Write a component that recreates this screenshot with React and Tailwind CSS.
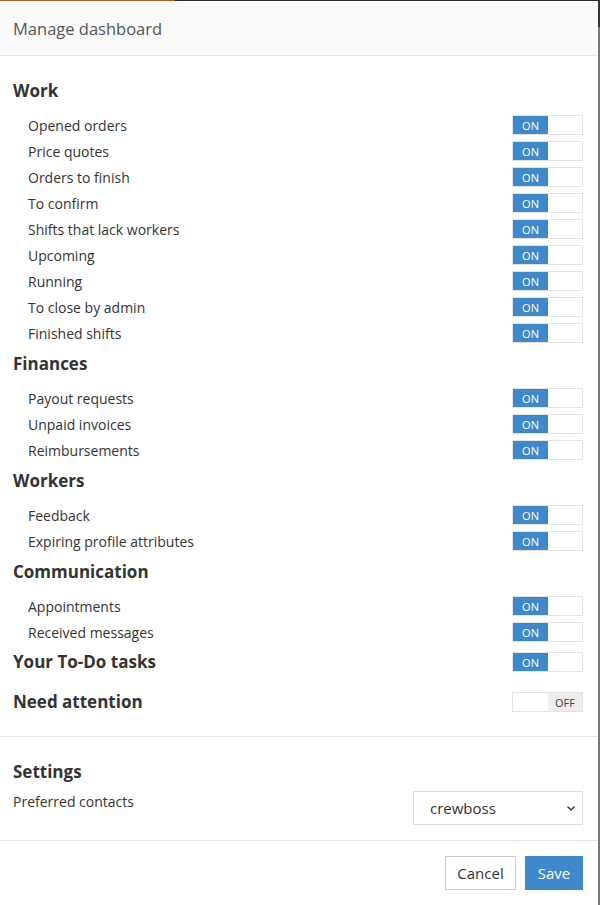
import React from "react";

const font = { fontFamily: '"Open Sans", "Noto Sans", sans-serif' };

function Toggle({ on = true }) {
  return (
    <div className="flex h-[20px] w-[71px] border border-[#e3e3e3] bg-white text-[11px] leading-none">
      {on ? (
        <>
          <div className="flex w-[35px] items-center justify-center bg-[#3f89cb] text-white">ON</div>
          <div className="flex-1 bg-white" />
        </>
      ) : (
        <>
          <div className="w-[35px] bg-white" />
          <div className="flex flex-1 items-center justify-center bg-[#eeeeee] text-[#444]">OFF</div>
        </>
      )}
    </div>
  );
}

function Heading({ children, toggle, className = "" }) {
  return (
    <div className={"flex h-[24px] items-center justify-between pr-[15px] " + className}>
      <span className="text-[17px] font-bold text-[#333]">{children}</span>
      {toggle}
    </div>
  );
}

function Item({ label, on = true }) {
  return (
    <div className="flex h-[26px] items-center justify-between pl-[15px] pr-[15px]">
      <span className="text-[14px] text-[#333]">{label}</span>
      <Toggle on={on} />
    </div>
  );
}

function Section({ title, items, first }) {
  return (
    <div className={first ? "" : "mt-[6px]"}>
      <Heading className="mb-[9px]">{title}</Heading>
      {items.map((it) => (
        <Item key={it} label={it} />
      ))}
    </div>
  );
}

export default function App() {
  return (
    <div style={font} className="flex h-[905px] w-[600px] flex-col overflow-hidden bg-[#777]">
      <div className="flex h-[1px] w-full">
        <div className="w-[175px] bg-[#a2621c]" />
        <div className="flex-1 bg-[#2a2a2a]" />
      </div>
      <div className="flex flex-1">
        <div className="flex w-[598px] flex-col bg-white">
          <div className="flex h-[55px] items-center border-b border-[#e5e5e5] bg-[#fafafa] px-[13px] pt-[2px]">
            <span className="text-[16.5px] text-[#555]">Manage dashboard</span>
          </div>
          <div className="pl-[13px] pt-[23px]">
            <Section
              first
              title="Work"
              items={[
                "Opened orders",
                "Price quotes",
                "Orders to finish",
                "To confirm",
                "Shifts that lack workers",
                "Upcoming",
                "Running",
                "To close by admin",
                "Finished shifts",
              ]}
            />
            <Section title="Finances" items={["Payout requests", "Unpaid invoices", "Reimbursements"]} />
            <Section title="Workers" items={["Feedback", "Expiring profile attributes"]} />
            <Section title="Communication" items={["Appointments", "Received messages"]} />
            <Heading className="mt-[5px]" toggle={<Toggle on />}>
              Your To-Do tasks
            </Heading>
            <Heading className="mt-[16px]" toggle={<Toggle on={false} />}>
              Need attention
            </Heading>
          </div>
          <div className="mt-[22px] border-t border-[#e5e5e5] pl-[13px] pr-[15px] pt-[23px] pb-[15px]">
            <div className="flex h-[24px] items-center">
              <span className="text-[17px] font-bold text-[#333]">Settings</span>
            </div>
            <div className="mt-[7px] flex items-start justify-between">
              <span className="mt-[-1px] text-[14px] leading-[24px] text-[#333]">Preferred contacts</span>
              <div className="flex h-[34px] w-[170px] items-center justify-between border border-[#dddddd] bg-white pl-[16px] pr-[6px]">
                <span className="text-[15px] text-[#333]">crewboss</span>
                <svg width="10" height="10" viewBox="0 0 10 10" fill="none">
                  <path d="M1.5 3.5 L5 7 L8.5 3.5" stroke="#333" strokeWidth="1.4" />
                </svg>
              </div>
            </div>
          </div>
          <div className="flex justify-end gap-[9px] border-t border-[#e5e5e5] pt-[15px] pr-[15px]">
            <button className="flex h-[34px] w-[71px] items-center justify-center border border-[#cccccc] bg-white text-[15px] text-[#333]">
              Cancel
            </button>
            <button className="flex h-[34px] w-[58px] items-center justify-center bg-[#3f89cb] text-[15px] text-white">
              Save
            </button>
          </div>
        </div>
        <div className="flex w-[2px] flex-col">
          <div className="h-[26px] bg-[#333]" />
          <div className="flex-1 bg-[#777]" />
        </div>
      </div>
    </div>
  );
}
